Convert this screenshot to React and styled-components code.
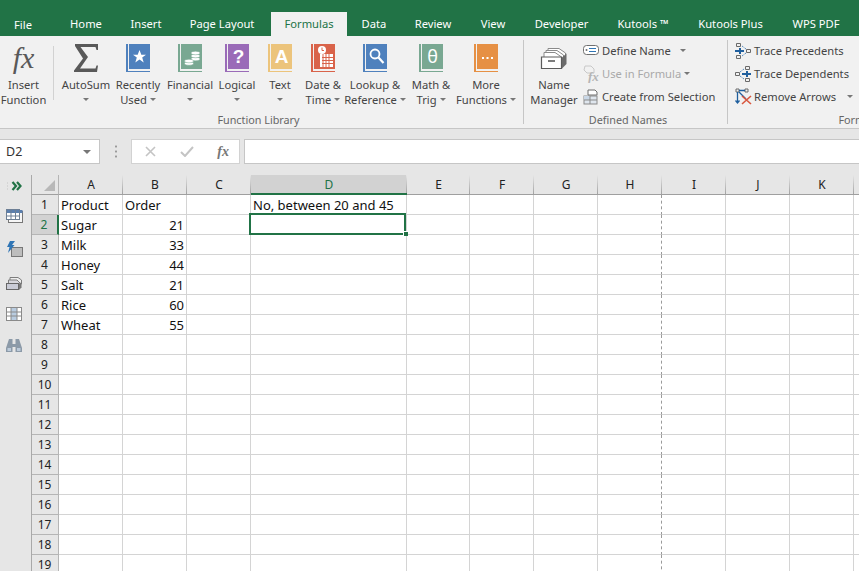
import styled, { createGlobalStyle } from "styled-components";

const green = "#217346";
const font = `"Noto Sans", "Open Sans", sans-serif`;

const tabs = [
  ["Home", 66],
  ["Insert", 54],
  ["Page Layout", 98],
  ["Formulas", 76, true],
  ["Data", 54],
  ["Review", 64],
  ["View", 56],
  ["Developer", 81],
  ["Kutools ™", 82],
  ["Kutools Plus", 93],
  ["WPS PDF", 78],
];

// the last column is only a sliver in the window, its letter is out of view
const columns = [
  ["A", 64],
  ["B", 64],
  ["C", 64],
  ["D", 156],
  ["E", 63],
  ["F", 64],
  ["G", 64],
  ["H", 64],
  ["I", 64],
  ["J", 64],
  ["K", 64],
  ["", 64],
];

const data = {
  1: { A: "Product", B: "Order", D: "No, between 20 and 45" },
  2: { A: "Sugar", B: 21 },
  3: { A: "Milk", B: 33 },
  4: { A: "Honey", B: 44 },
  5: { A: "Salt", B: 21 },
  6: { A: "Rice", B: 60 },
  7: { A: "Wheat", B: 55 },
};

const rows = Array.from({ length: 19 }, (_, i) => i + 1);

function Book({ color, children }) {
  return (
    <svg width="24" height="28" viewBox="0 0 24 28">
      <rect x="0" y="0" width="2" height="28" fill={color} />
      <rect x="3" y="0" width="21" height="25" fill={color} />
      <rect x="2" y="27" width="22" height="1" fill={color} />
      {children}
    </svg>
  );
}

const SigmaIcon = () => (
  <svg width="24" height="28" viewBox="0 0 24 28">
    <path d="M1 0H24V6H22.500L21.500 3H6.500L14 13L6 24.500H21.500L22.500 21.500H24L23 28H0V26.500L9 14.500L1 2Z" fill="#595959" />
  </svg>
);

const CoinsIcon = () => (
  <g fill="#fff" stroke="#79a892" strokeWidth=".5">
    <ellipse cx="17.500" cy="15" rx="4.500" ry="1.800" />
    <ellipse cx="17.500" cy="12" rx="4.500" ry="1.800" />
    <ellipse cx="17.500" cy="9" rx="4.500" ry="1.800" />
    <ellipse cx="11" cy="19.500" rx="4.500" ry="1.800" />
    <ellipse cx="11" cy="17" rx="4.500" ry="1.800" />
  </g>
);

const CalendarPic = () => (
  <g>
    <rect x="9" y="10" width="13" height="13" fill="#fff" />
    <path d="M11 13.500H22M11 16.500H22M11 19.500H22M12 10V23M15 10V23M18 10V23" stroke="#d9634a" strokeWidth="1" />
    <circle cx="11" cy="6" r="4" fill="#fff" />
    <path d="M11 3.500V6.500H13" stroke="#d9634a" fill="none" />
  </g>
);

const SearchPic = () => (
  <g fill="none" stroke="#fff" strokeWidth="1.800">
    <circle cx="12" cy="10" r="4.500" />
    <path d="M15.500 13.500L20.500 19" strokeWidth="2.200" />
  </g>
);

const LetterPic = ({ children, size, color = "#fff" }) => (
  <text x="13.500" y="19" textAnchor="middle" fontFamily="Liberation Sans, sans-serif" fontWeight="700" fontSize={size} fill={color}>
    {children}
  </text>
);

const NameManagerIcon = () => (
  <svg width="28" height="24" viewBox="0 0 28 24">
    <g fill="#fff" stroke="#8a8a8a">
      <path d="M8 2.500H19L25.500 7V12H8Z" />
      <path d="M6 4.500H17L23.500 9V14H6Z" />
      <path d="M4 6.500H15L21.500 11V16H4Z" />
      <path d="M1.500 11H21.500V22.500H1.500Z" stroke="#5c5c5c" strokeWidth="1.200" />
    </g>
    <rect x="8" y="14" width="7" height="2" fill="#7c7c7c" />
    <path d="M22 11.500L26.500 7.500V18L22 22.500Z" fill="#6b6b6b" />
  </svg>
);

const TagIcon = () => (
  <svg width="16" height="11" viewBox="0 0 16 11">
    <rect x=".5" y=".5" width="15" height="9" rx="3" fill="#fff" stroke="#6f6f6f" />
    <circle cx="3.500" cy="5" r="1" fill="#6f6f6f" />
    <path d="M6 3.500H13M6 6.500H13" stroke="#2f75b5" />
  </svg>
);

const UseFormulaIcon = () => (
  <svg width="18" height="18" viewBox="0 0 18 18">
    <path d="M2 1H8L11 4V8H4L1 5Z" fill="none" stroke="#c8c8c8" />
    <text x="5" y="16" fontFamily="Liberation Serif, serif" fontStyle="italic" fontWeight="700" fontSize="13" fill="#b5b5b5">
      fx
    </text>
  </svg>
);

const CreateIcon = () => (
  <svg width="16" height="16" viewBox="0 0 16 16">
    <rect x="1" y="7" width="13" height="8" fill="#dfe6ee" stroke="#8b8b8b" />
    <rect x="1" y="7" width="6" height="4" fill="#c9d7e6" />
    <path d="M7 7V15M1 11H14" stroke="#8b8b8b" />
    <path d="M5 1H12L14 3V6H5Z" fill="#fff" stroke="#6f6f6f" />
  </svg>
);

const Dots = ({ d }) => <path d={d} fill="none" stroke="#6a6a6a" />;

const PrecedentsIcon = () => (
  <svg width="16" height="16" viewBox="0 0 16 16">
    <Dots d="M1.500 .5H5.500V3.500H1.500ZM1.500 12.500H5.500V15.500H1.500ZM11.500 6.500H15.500V9.500H11.500Z" />
    <path d="M0 8H9M5 5V11" stroke="#1f5f9e" strokeWidth="2" />
    <path d="M7 3L11 6M7 13L11 10" stroke="#2f75b5" strokeDasharray="1 1" />
  </svg>
);

const DependentsIcon = () => (
  <svg width="16" height="16" viewBox="0 0 16 16">
    <Dots d="M10.500 .5H14.500V3.500H10.500ZM10.500 12.500H14.500V15.500H10.500ZM.5 6.500H4.500V9.500H.5Z" />
    <path d="M7 8H16M12 5V11" stroke="#1f5f9e" strokeWidth="2" />
    <path d="M5 6L9 3M5 10L9 13" stroke="#2f75b5" strokeDasharray="1 1" />
  </svg>
);

const RemoveIcon = () => (
  <svg width="18" height="17" viewBox="0 0 18 17">
    <Dots d="M1 1H4V4H1ZM10 1H13V4H10Z" />
    <path d="M4 2.500H10M2.500 4V15M.5 12.500L2.500 15L4.500 12.500M4 4L11 11" stroke="#1f5f9e" strokeWidth="1.300" fill="none" />
    <path d="M7 8L16 16M16 8L7 16" stroke="#d9573f" strokeWidth="1.600" />
  </svg>
);

const ChevronsIcon = () => (
  <svg width="15" height="10" viewBox="0 0 15 10">
    <path d="M0 2H1M0 5H1M0 8H1" stroke="#c4c4c4" />
    <path d="M5.500 1L9 5L5.500 9M10 1L13.500 5L10 9" fill="none" stroke={green} strokeWidth="2.200" />
  </svg>
);

const TableSideIcon = () => (
  <svg width="17" height="14" viewBox="0 0 17 14">
    <rect x="2.500" y="2.500" width="14" height="11" fill="#f6f6f6" stroke="#777" />
    <rect x="14" y="1" width="2.500" height="3" fill="#5b7fae" />
    <rect x=".5" y=".5" width="13" height="10" fill="#fff" stroke="#6d7f95" />
    <rect x="1" y="1" width="12" height="3" fill="#5b7fae" />
    <path d="M5 1V10M9.500 1V10M1 7H13" stroke="#6d7f95" />
  </svg>
);

const FlashSideIcon = () => (
  <svg width="17" height="16" viewBox="0 0 17 16">
    <rect x="5.500" y="6.500" width="11" height="9" fill="#bdbdbd" stroke="#777" />
    <path d="M4 0H9L6 4H8.500L2 12L3.500 6H1Z" fill="#2f75b5" />
  </svg>
);

const StackSideIcon = () => (
  <svg width="16" height="14" viewBox="0 0 16 14">
    <path d="M4 .5H12L15.500 3V7H4Z" fill="#eee" stroke="#7d7d7d" />
    <path d="M2.500 3H11L14 6V9H2.500Z" fill="#d6d6dc" stroke="#7d7d7d" />
    <rect x=".5" y="6.500" width="12" height="6" fill="#c9cbd6" stroke="#666" />
    <path d="M13 7L15.500 5V10.500L13 13Z" fill="#777" />
  </svg>
);

const GridSideIcon = () => (
  <svg width="16" height="14" viewBox="0 0 16 14">
    <rect x=".5" y=".5" width="15" height="13" fill="#fff" stroke="#8a8a8a" />
    <rect x="5" y="1" width="6" height="12" fill="#b9cce0" />
    <path d="M5 1V13M11 1V13M1 5H15M1 9H15" stroke="#8a8a8a" />
  </svg>
);

const BinocularsSideIcon = () => (
  <svg width="16" height="13" viewBox="0 0 16 13">
    <path d="M3 0H6.500V5H9.500V0H13L16 9V13H9.500V8H6.500V13H0V9Z" fill="#8c9aa8" />
    <rect x="1.500" y="9" width="3.500" height="3" fill="#bccbdb" />
    <rect x="11" y="9" width="3.500" height="3" fill="#bccbdb" />
  </svg>
);

const CloseGlyph = () => (
  <svg width="11" height="11" viewBox="0 0 11 11">
    <path d="M1 1L10 10M10 1L1 10" stroke="#c4c4c4" strokeWidth="1.600" />
  </svg>
);

const CheckGlyph = () => (
  <svg width="14" height="11" viewBox="0 0 14 11">
    <path d="M1 6L5 10L13 1" fill="none" stroke="#c4c4c4" strokeWidth="2" />
  </svg>
);

function BigButton({ w, icon, first, second, caret }) {
  return (
    <BigItem $w={w}>
      <IconBox>{icon}</IconBox>
      <BigLabel>{first}</BigLabel>
      <BigLabel>
        {second}
        {caret && <Caret $inline={!!second} />}
      </BigLabel>
    </BigItem>
  );
}

function SmallButton({ icon, label, disabled, caret, gap }) {
  return (
    <SmallItem $disabled={disabled}>
      <SmallIcon>{icon}</SmallIcon>
      {label}
      {caret && <SmallCaret $gap={gap} />}
    </SmallItem>
  );
}

export default function App() {
  return (
    <>
      <GlobalStyle />
      <Page>
        <TabBar>
          <FileTab>File</FileTab>
          {tabs.map(([label, w, active]) => (
            <Tab key={label} $w={w} $active={active}>
              {label}
            </Tab>
          ))}
        </TabBar>

        <Ribbon>
          <LibraryGroup>
            <GroupRow>
              <BigButton w={47} icon={<FxBig>fx</FxBig>} first="Insert" second="Function" />
              <InnerSep />
              <BigButton w={52} icon={<SigmaIcon />} first="AutoSum" caret />
              <BigButton
                w={52}
                icon={
                  <Book color="#4f81bd">
                    <path d="M13.500 6L15.300 10.700H20L16.200 13.600L17.700 18.500L13.500 15.500L9.300 18.500L10.800 13.600L7 10.700H11.700Z" fill="#fff" />
                  </Book>
                }
                first="Recently"
                second="Used"
                caret
              />
              <BigButton
                w={52}
                icon={
                  <Book color="#79a892">
                    <CoinsIcon />
                  </Book>
                }
                first="Financial"
                caret
              />
              <BigButton
                w={42}
                icon={
                  <Book color="#9a6bb8">
                    <LetterPic size="19">?</LetterPic>
                  </Book>
                }
                first="Logical"
                caret
              />
              <BigButton
                w={44}
                icon={
                  <Book color="#ecc47c">
                    <LetterPic size="19">A</LetterPic>
                  </Book>
                }
                first="Text"
                caret
              />
              <BigButton
                w={42}
                icon={
                  <Book color="#d9634a">
                    <CalendarPic />
                  </Book>
                }
                first="Date &"
                second="Time"
                caret
              />
              <BigButton
                w={62}
                icon={
                  <Book color="#4f81bd">
                    <SearchPic />
                  </Book>
                }
                first="Lookup &"
                second="Reference"
                caret
              />
              <BigButton
                w={50}
                icon={
                  <Book color="#79a892">
                    <text x="13.500" y="19" textAnchor="middle" fontFamily="Noto Sans, sans-serif" fontSize="18" fill="#fff">
                      θ
                    </text>
                  </Book>
                }
                first="Math &"
                second="Trig"
                caret
              />
              <BigButton
                w={60}
                icon={
                  <Book color="#e69044">
                    <path d="M8 13H10V15H8ZM12.500 13H14.500V15H12.500ZM17 13H19V15H17Z" fill="#fff" />
                  </Book>
                }
                first="More"
                second="Functions"
                caret
              />
            </GroupRow>
            <LibraryLabel>Function Library</LibraryLabel>
          </LibraryGroup>

          <NamesGroup>
            <GroupRow>
              <BigButton w={52} icon={<NameManagerIcon />} first="Name" second="Manager" />
              <NamesColumn>
                <SmallButton icon={<TagIcon />} label="Define Name" caret gap={9} />
                <SmallButton icon={<UseFormulaIcon />} label="Use in Formula" disabled caret gap={3} />
                <SmallButton icon={<CreateIcon />} label="Create from Selection" />
              </NamesColumn>
            </GroupRow>
            <GroupLabel>Defined Names</GroupLabel>
          </NamesGroup>

          <AuditGroup>
            <GroupRow>
              <SmallColumn>
                <SmallButton icon={<PrecedentsIcon />} label="Trace Precedents" />
                <SmallButton icon={<DependentsIcon />} label="Trace Dependents" />
                <SmallButton icon={<RemoveIcon />} label="Remove Arrows" caret gap={11} />
              </SmallColumn>
            </GroupRow>
            <GroupLabel>Formula Auditing</GroupLabel>
          </AuditGroup>
        </Ribbon>

        <FormulaBar>
          <NameBox>
            D2
            <NameCaret />
          </NameBox>
          <Grip />
          <FormulaButtons>
            <CloseGlyph />
            <CheckGlyph />
            <FxSmall>fx</FxSmall>
          </FormulaButtons>
          <FormulaInput />
        </FormulaBar>

        <Workspace>
          <Sidebar>
            <SideIcon>
              <ChevronsIcon />
            </SideIcon>
            <SideIcon $gap={14}>
              <TableSideIcon />
            </SideIcon>
            <SideIcon $gap={17}>
              <FlashSideIcon />
            </SideIcon>
            <SideIcon $gap={19}>
              <StackSideIcon />
            </SideIcon>
            <SideIcon $gap={14}>
              <GridSideIcon />
            </SideIcon>
            <SideIcon $gap={15}>
              <BinocularsSideIcon />
            </SideIcon>
          </Sidebar>

          <Sheet>
            <Corner />
            {columns.map(([name]) => (
              <ColHead key={name} $selected={name === "D"}>
                {name}
              </ColHead>
            ))}
            {rows.map((row) => (
              <SheetRow key={row} row={row} />
            ))}
          </Sheet>
        </Workspace>
      </Page>
    </>
  );
}

function SheetRow({ row }) {
  return (
    <>
      <RowHead $selected={row === 2}>{row}</RowHead>
      {columns.map(([name]) => {
        const value = data[row]?.[name];
        return (
          <Cell
            key={name}
            $number={typeof value === "number"}
            $active={row === 2 && name === "D"}
            $pageBreak={name === "H"}
          >
            {value}
          </Cell>
        );
      })}
    </>
  );
}

const GlobalStyle = createGlobalStyle`
  html, body {
    margin: 0;
    padding: 0;
    background: #fff;
  }
`;

const Page = styled.div`
  width: 859px;
  height: 571px;
  overflow: hidden;
  font-family: ${font};
  background: #e6e6e6;
`;

const TabBar = styled.div`
  display: flex;
  align-items: flex-end;
  height: 36px;
  background: ${green};
`;

const Tab = styled.div`
  flex: none;
  width: ${(p) => p.$w}px;
  height: 24px;
  line-height: 24px;
  text-align: center;
  font-size: 11.2px;
  white-space: nowrap;
  color: ${(p) => (p.$active ? green : "#fff")};
  background: ${(p) => (p.$active ? "#f1f1f1" : "transparent")};
`;

const FileTab = styled.div`
  flex: none;
  width: 46px;
  margin-right: 7px;
  height: 24px;
  line-height: 26px;
  text-align: center;
  font-size: 11.2px;
  color: #fff;
`;

const Ribbon = styled.div`
  display: flex;
  height: 92px;
  background: #f1f1f1;
  border-bottom: 1px solid #c6c6c6;
  color: #444;
`;

const Group = styled.div`
  flex: none;
  display: flex;
  flex-direction: column;
  position: relative;
  &::after {
    content: "";
    position: absolute;
    right: 0;
    top: 4px;
    bottom: 4px;
    width: 1px;
    background: #c6c6c6;
  }
`;

const LibraryGroup = styled(Group)`
  width: 524px;
`;

const NamesGroup = styled(Group)`
  width: 204px;
  padding-left: 4px;
  box-sizing: border-box;
`;

const AuditGroup = styled(Group)`
  width: 302px;
  padding-left: 7px;
  box-sizing: border-box;
`;

const GroupRow = styled.div`
  display: flex;
  flex: 1;
`;

const GroupLabel = styled.div`
  height: 16px;
  line-height: 16px;
  font-size: 10.8px;
  text-align: center;
  color: #666;
  white-space: nowrap;
`;

const LibraryLabel = styled(GroupLabel)`
  padding-right: 7px;
`;

const InnerSep = styled.div`
  flex: none;
  width: 1px;
  height: 54px;
  margin: 10px 6px 0 6px;
  background: #d2d2d2;
`;

const BigItem = styled.div`
  flex: none;
  width: ${(p) => p.$w}px;
  display: flex;
  flex-direction: column;
  align-items: center;
  padding-top: 8px;
`;

const IconBox = styled.div`
  height: 28px;
  margin-bottom: 5px;
  display: flex;
  align-items: center;
  justify-content: center;
`;

const FxBig = styled.span`
  font-family: "Liberation Serif", serif;
  font-style: italic;
  font-size: 30px;
  line-height: 28px;
  color: #595959;
`;

const BigLabel = styled.div`
  height: 15px;
  line-height: 15px;
  font-size: 11.2px;
  white-space: nowrap;
  display: flex;
  align-items: center;
`;

const Caret = styled.span`
  display: inline-block;
  width: 0;
  height: 0;
  margin-left: ${(p) => (p.$inline ? "3px" : "0")};
  border-left: 3px solid transparent;
  border-right: 3px solid transparent;
  border-top: 3px solid #777;
`;

const SmallColumn = styled.div`
  display: flex;
  flex-direction: column;
  padding-top: 3px;
`;

const NamesColumn = styled(SmallColumn)`
  margin-left: 3px;
`;

const SmallItem = styled.div`
  height: 23px;
  display: flex;
  align-items: center;
  font-size: 11.2px;
  white-space: nowrap;
  color: ${(p) => (p.$disabled ? "#a9a9a9" : "#444")};
`;

const SmallIcon = styled.span`
  flex: none;
  width: 19px;
  display: flex;
  align-items: center;
`;

const SmallCaret = styled(Caret)`
  margin-left: ${(p) => p.$gap}px;
`;

const FormulaBar = styled.div`
  display: flex;
  align-items: stretch;
  height: 25px;
  padding-top: 10px;
`;

const NameBox = styled.div`
  flex: none;
  width: 100px;
  box-sizing: border-box;
  padding: 0 8px 0 6px;
  display: flex;
  align-items: center;
  justify-content: space-between;
  background: #fff;
  border: 1px solid #c6c6c6;
  border-left: none;
  font-size: 12.5px;
  color: #333;
`;

const NameCaret = styled.span`
  width: 0;
  height: 0;
  border-left: 4px solid transparent;
  border-right: 4px solid transparent;
  border-top: 4px solid #777;
`;

const Grip = styled.div`
  flex: none;
  width: 31px;
  background: radial-gradient(circle, #9a9a9a 1px, transparent 1.200px) center / 4px 5px repeat-y;
  margin: 6px 0;
`;

const FormulaButtons = styled.div`
  flex: none;
  width: 109px;
  box-sizing: border-box;
  padding: 0 10px 0 13px;
  display: flex;
  align-items: center;
  justify-content: space-between;
  background: #fff;
  border: 1px solid #d2d2d2;
`;

const FxSmall = styled.span`
  font-family: "Liberation Serif", serif;
  font-style: italic;
  font-weight: 700;
  font-size: 14px;
  color: #777;
`;

const FormulaInput = styled.div`
  flex: 1;
  margin-left: 4px;
  background: #fff;
  border: 1px solid #c6c6c6;
  border-right: none;
`;

const Workspace = styled.div`
  display: flex;
  margin-top: 11px;
  height: 396px;
`;

const Sidebar = styled.div`
  flex: none;
  width: 32px;
  box-sizing: border-box;
  padding: 3px 3px 0 0;
  display: flex;
  flex-direction: column;
  align-items: center;
  border-right: 1px solid #a9a9a9;
`;

const SideIcon = styled.div`
  height: 16px;
  margin-top: ${(p) => p.$gap || 0}px;
  display: flex;
  align-items: center;
  justify-content: center;
`;

const Sheet = styled.div`
  flex: 1;
  display: grid;
  grid-template-columns: 27px ${columns.map(([, w]) => `${w}px`).join(" ")};
  grid-auto-rows: 20px;
  overflow: hidden;
  background: #fff;
  font-size: 13px;
  color: #111;
`;

const Corner = styled.div`
  position: relative;
  background: #e6e6e6;
  border-bottom: 1px solid #9f9f9f;
  border-right: 1px solid #b5b5b5;
  &::after {
    content: "";
    position: absolute;
    right: 3px;
    bottom: 3px;
    border-left: 11px solid transparent;
    border-bottom: 11px solid #b8b8b8;
  }
`;

const ColHead = styled.div`
  box-sizing: border-box;
  text-align: center;
  line-height: 19px;
  font-size: 12px;
  color: ${(p) => (p.$selected ? green : "#222")};
  background:
    linear-gradient(#e6e6e6, #a2a2a2) right top / 1px 100% no-repeat,
    ${(p) => (p.$selected ? "#d2d2d2" : "#e6e6e6")};
  border-bottom: ${(p) => (p.$selected ? `2px solid ${green}` : "1px solid #9f9f9f")};
`;

const RowHead = styled.div`
  box-sizing: border-box;
  text-align: center;
  padding-right: 1px;
  line-height: 20px;
  font-size: 12px;
  color: ${(p) => (p.$selected ? green : "#222")};
  background: ${(p) => (p.$selected ? "#d2d2d2" : "#e6e6e6")};
  border-bottom: 1px solid #b5b5b5;
  border-right: ${(p) => (p.$selected ? `2px solid ${green}` : "1px solid #b5b5b5")};
`;

const Cell = styled.div`
  position: relative;
  box-sizing: border-box;
  padding: 0 2px;
  line-height: 20px;
  white-space: nowrap;
  text-align: ${(p) => (p.$number ? "right" : "left")};
  border-bottom: 1px solid #d4d4d4;
  border-right: ${(p) => (p.$pageBreak ? "1px dashed #9a9a9a" : "1px solid #d4d4d4")};
  ${(p) =>
    p.$active &&
    `
    &::before {
      content: "";
      position: absolute;
      left: -2px;
      top: -2px;
      right: 0;
      bottom: -1px;
      border: 2px solid ${green};
    }
    &::after {
      content: "";
      position: absolute;
      right: -2px;
      bottom: -2px;
      width: 4px;
      height: 4px;
      background: ${green};
      border: 1px solid #fff;
      border-right: none;
      border-bottom: none;
      z-index: 1;
    }
  `}
`;
